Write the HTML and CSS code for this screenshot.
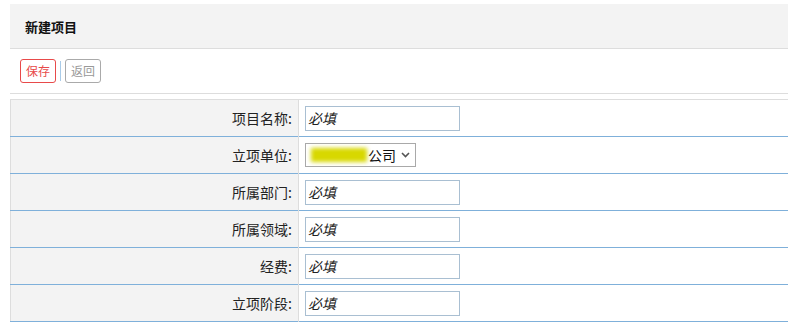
FILE: index.html
```html
<!DOCTYPE html>
<html lang="zh-CN">
<head>
  <meta charset="UTF-8" />
  <title>新建项目</title>
  <link rel="stylesheet" href="styles.css">
</head>
<body>
  <div class="page">
    <div class="page-header">
      <h2 class="page-title">新建项目</h2>
    </div>

    <div class="toolbar">
      <button class="btn btn-save">保存</button>
      <span class="toolbar-sep"></span>
      <button class="btn btn-back">返回</button>
    </div>

    <table class="form-table">
      <tr>
        <th>项目名称:</th>
        <td><input class="field" type="text" placeholder="必填"></td>
      </tr>
      <tr>
        <th>立项单位:</th>
        <td>
          <div class="select-box">
            <span class="redacted"></span>
            <span class="select-text">公司</span>
            <svg class="select-arrow" width="9" height="6" viewBox="0 0 9 6">
              <path d="M1 1 L4.5 4.5 L8 1" fill="none" stroke="#555" stroke-width="1.6"/>
            </svg>
          </div>
        </td>
      </tr>
      <tr>
        <th>所属部门:</th>
        <td><input class="field" type="text" placeholder="必填"></td>
      </tr>
      <tr>
        <th>所属领域:</th>
        <td><input class="field" type="text" placeholder="必填"></td>
      </tr>
      <tr>
        <th>经费:</th>
        <td><input class="field" type="text" placeholder="必填"></td>
      </tr>
      <tr>
        <th>立项阶段:</th>
        <td><input class="field" type="text" placeholder="必填"></td>
      </tr>
    </table>
  </div>
</body>
</html>
```

FILE: styles.css
```css
body {
  margin: 0;
  background: #fff;
  font-family: "Noto Sans CJK SC", "Noto Sans", sans-serif;
  color: #222;
  overflow: hidden;
}

.page {
  margin: 4px 0 0 10px;
}

.page-header {
  background: #f3f3f3;
  height: 44px;
  border-bottom: 1px solid #dddddd;
  display: flex;
  align-items: center;
  padding-left: 15px;
}

.page-title {
  margin: 0;
  font-size: 13px;
  font-weight: bold;
  color: #111;
  line-height: 1;
}

.toolbar {
  height: 44px;
  border-bottom: 1px solid #dddddd;
  display: flex;
  align-items: center;
  padding-left: 10px;
  gap: 4px;
}

.btn {
  height: 24px;
  width: 36px;
  padding: 0;
  font-family: "Noto Sans CJK SC", sans-serif;
  font-size: 12px;
  background: #fff;
  border-radius: 3px;
  cursor: pointer;
  line-height: 22px;
}

.btn-save {
  border: 1px solid #e84a4a;
  color: #e84a4a;
}

.btn-back {
  border: 1px solid #aaaaaa;
  color: #999;
}

.toolbar-sep {
  width: 1px;
  height: 20px;
  background: #a9cbe8;
}

.form-table {
  margin-top: 5px;
  width: 100%;
  border-collapse: collapse;
  border-top: 1px solid #dddddd;
  border-left: 1px solid #dddddd;
}

.form-table tr {
  height: 37px;
  border-bottom: 1px solid #7fb0da;
}

.form-table th {
  width: 281px;
  background: #f3f3f3;
  border-right: 1px solid #dddddd;
  text-align: right;
  font-weight: normal;
  font-size: 14px;
  color: #222;
  padding: 0 6px 0 0;
  height: 36px;
}

.form-table td {
  padding: 0 0 0 6px;
  height: 36px;
}

.field {
  display: block;
  box-sizing: border-box;
  width: 155px;
  height: 25px;
  border: 1px solid #a9bfd2;
  padding: 0 2px;
  font-family: "Noto Sans CJK SC", sans-serif;
  font-size: 14px;
  font-style: italic;
  outline: none;
}

.field::placeholder {
  color: #222;
  font-style: italic;
}

.select-box {
  box-sizing: border-box;
  width: 111px;
  height: 24px;
  border: 1px solid #a9a9a9;
  display: flex;
  align-items: center;
  padding: 0 4px;
  font-size: 14px;
  color: #111;
}

.redacted {
  width: 56px;
  height: 14px;
  background: #d8d800;
  filter: blur(2px);
  margin-left: 1px;
}

.select-text {
  margin-left: 1px;
}

.select-arrow {
  margin-left: auto;
  margin-right: 1px;
}
```
